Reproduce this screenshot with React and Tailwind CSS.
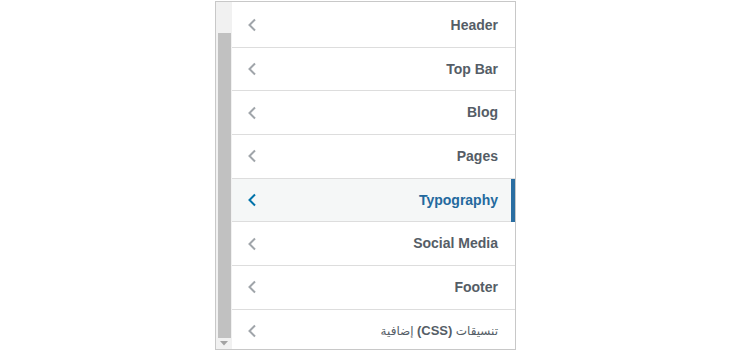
const sections = [
  "Header",
  "Top Bar",
  "Blog",
  "Pages",
  "Typography",
  "Social Media",
  "Footer",
];

function Chevron({ active }) {
  return (
    <svg width="10" height="14" viewBox="0 0 10 14" className="shrink-0">
      <polyline
        points="8,1.5 2.5,7 8,12.5"
        fill="none"
        stroke={active ? "#0073aa" : "#a0a5aa"}
        strokeWidth="2"
      />
    </svg>
  );
}

function Row({ active, children }) {
  return (
    <li
      dir="rtl"
      className={`relative shrink-0 h-[43.7px] border-b border-[#dddddd] flex items-center justify-between pr-[17px] pl-[15px] ${
        active ? "bg-[#f5f7f7]" : "bg-white"
      }`}
    >
      {children}
      <Chevron active={active} />
      {active && (
        <span className="absolute right-0 top-0 bottom-[-1px] w-[4px] bg-[#2a6ea2]" />
      )}
    </li>
  );
}

export default function App() {
  return (
    <div className="w-[750px] h-[351px] bg-white overflow-hidden font-['Liberation_Sans','DejaVu_Sans',sans-serif]">
      <div className="ml-[215px] mt-[1px] w-[301px] h-[349px] border border-[#c8c8c8] flex overflow-hidden">
        {/* scrollbar */}
        <div className="w-[16px] h-full bg-[#f1f1f1] flex flex-col items-center">
          <div className="h-[31px] shrink-0" />
          <div className="w-[13px] ml-[1px] flex-1 bg-[#c1c1c1]" />
          <div className="h-[11px] shrink-0 flex items-center justify-center">
            <svg width="8" height="5" viewBox="0 0 8 5">
              <polygon points="0,0 8,0 4,4.5" fill="#a3a3a3" />
            </svg>
          </div>
        </div>
        {/* section list */}
        <ul className="flex-1 flex flex-col pt-[2px]">
          {sections.map((s) => {
            const active = s === "Typography";
            return (
              <Row key={s} active={active}>
                <span
                  className={`text-[14px] font-bold ${
                    active ? "text-[#23699e]" : "text-[#555d66]"
                  }`}
                >
                  {s}
                </span>
              </Row>
            );
          })}
          <Row>
            <span className="text-[12px] font-medium text-[#555d66]">
              تنسيقات <b className="font-bold text-[13px]">(CSS)</b> إضافية
            </span>
          </Row>
        </ul>
      </div>
    </div>
  );
}
